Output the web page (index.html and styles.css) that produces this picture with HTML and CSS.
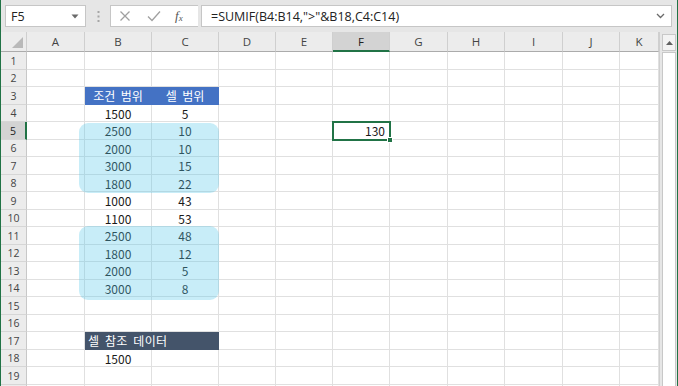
FILE: index.html
```html
<!DOCTYPE html>
<html lang="ko">
<head>
<meta charset="utf-8">
<title>SUMIF</title>
<link rel="stylesheet" href="styles.css">
</head>
<body>
<div class="app">
  <div class="toolbar">
    <div class="namebox">
      <span>F5</span>
      <svg class="nb-arrow" width="8" height="5" viewBox="0 0 8 5"><path d="M0.5 0.5 L7.5 0.5 L4 4.5 Z" fill="#6a6a6a"/></svg>
    </div>
    <div class="grip">
      <svg width="3" height="11" viewBox="0 0 3 11"><rect x="0.5" y="0" width="2" height="2" fill="#a6a6a6"/><rect x="0.5" y="4.5" width="2" height="2" fill="#a6a6a6"/><rect x="0.5" y="9" width="2" height="2" fill="#a6a6a6"/></svg>
    </div>
    <div class="fnbtns">
      <svg class="ic-x" width="12" height="12" viewBox="0 0 12 12"><path d="M1.5 1.5 L10.5 10.5 M10.5 1.5 L1.5 10.5" stroke="#a0a0a0" stroke-width="1.3" fill="none"/></svg>
      <svg class="ic-ok" width="14" height="12" viewBox="0 0 14 12"><path d="M1 6.5 L5 10.5 L13 1.5" stroke="#a0a0a0" stroke-width="1.3" fill="none"/></svg>
      <span class="fx">f<sub>x</sub></span>
    </div>
    <div class="formula">
      <span class="ftext">=SUMIF(B4:B14,"&gt;"&amp;B18,C4:C14)</span>
      <svg class="chev" width="9" height="6" viewBox="0 0 9 6"><path d="M1 1 L4.5 4.5 L8 1" stroke="#6a6a6a" stroke-width="1.3" fill="none"/></svg>
    </div>
  </div>

  <div class="sheet">
    <div class="grid">
      <div class="row hdr">
        <div class="corner"><svg width="11" height="11" viewBox="0 0 11 11"><path d="M11 0 L11 11 L0 11 Z" fill="#b9b9b9"/></svg></div>
        <div>A</div><div>B</div><div>C</div><div>D</div><div>E</div><div class="selcol">F</div><div>G</div><div>H</div><div>I</div><div>J</div><div>K</div>
      </div>
      <div class="row r-odd"><div class="rh">1</div><div></div><div></div><div></div><div></div><div></div><div></div><div></div><div></div><div></div><div></div><div></div></div>
      <div class="row r-even"><div class="rh">2</div><div></div><div></div><div></div><div></div><div></div><div></div><div></div><div></div><div></div><div></div><div></div></div>
      <div class="row r-odd"><div class="rh">3</div><div></div><div class="blue c">조건 범위</div><div class="blue c">셀 범위</div><div></div><div></div><div></div><div></div><div></div><div></div><div></div><div></div></div>
      <div class="row r-even"><div class="rh">4</div><div></div><div class="c">1500</div><div class="c">5</div><div></div><div></div><div></div><div></div><div></div><div></div><div></div><div></div></div>
      <div class="row r-odd"><div class="rh selrow">5</div><div></div><div class="c">2500</div><div class="c">10</div><div></div><div></div><div class="r">130</div><div></div><div></div><div></div><div></div><div></div></div>
      <div class="row r-even"><div class="rh">6</div><div></div><div class="c">2000</div><div class="c">10</div><div></div><div></div><div></div><div></div><div></div><div></div><div></div><div></div></div>
      <div class="row r-odd"><div class="rh">7</div><div></div><div class="c">3000</div><div class="c">15</div><div></div><div></div><div></div><div></div><div></div><div></div><div></div><div></div></div>
      <div class="row r-even"><div class="rh">8</div><div></div><div class="c">1800</div><div class="c">22</div><div></div><div></div><div></div><div></div><div></div><div></div><div></div><div></div></div>
      <div class="row r-odd"><div class="rh">9</div><div></div><div class="c">1000</div><div class="c">43</div><div></div><div></div><div></div><div></div><div></div><div></div><div></div><div></div></div>
      <div class="row r-even"><div class="rh">10</div><div></div><div class="c">1100</div><div class="c">53</div><div></div><div></div><div></div><div></div><div></div><div></div><div></div><div></div></div>
      <div class="row r-odd"><div class="rh">11</div><div></div><div class="c">2500</div><div class="c">48</div><div></div><div></div><div></div><div></div><div></div><div></div><div></div><div></div></div>
      <div class="row r-even"><div class="rh">12</div><div></div><div class="c">1800</div><div class="c">12</div><div></div><div></div><div></div><div></div><div></div><div></div><div></div><div></div></div>
      <div class="row r-odd"><div class="rh">13</div><div></div><div class="c">2000</div><div class="c">5</div><div></div><div></div><div></div><div></div><div></div><div></div><div></div><div></div></div>
      <div class="row r-even"><div class="rh">14</div><div></div><div class="c">3000</div><div class="c">8</div><div></div><div></div><div></div><div></div><div></div><div></div><div></div><div></div></div>
      <div class="row r-odd"><div class="rh">15</div><div></div><div></div><div></div><div></div><div></div><div></div><div></div><div></div><div></div><div></div><div></div></div>
      <div class="row r-even"><div class="rh">16</div><div></div><div></div><div></div><div></div><div></div><div></div><div></div><div></div><div></div><div></div><div></div></div>
      <div class="row r-odd"><div class="rh">17</div><div></div><div class="dark span2">셀 참조 데이터</div><div></div><div></div><div></div><div></div><div></div><div></div><div></div><div></div></div>
      <div class="row r-even"><div class="rh">18</div><div></div><div class="c">1500</div><div></div><div></div><div></div><div></div><div></div><div></div><div></div><div></div><div></div></div>
      <div class="row r-odd"><div class="rh">19</div><div></div><div></div><div></div><div></div><div></div><div></div><div></div><div></div><div></div><div></div><div></div></div>
      <div class="row r-even"><div class="rh"></div><div></div><div></div><div></div><div></div><div></div><div></div><div></div><div></div><div></div><div></div><div></div></div>
    </div>

    <div class="vscroll">
      <div class="sb-up"><svg width="7" height="4" viewBox="0 0 7 4"><path d="M0 4 L3.5 0 L7 4 Z" fill="#606060"/></svg></div>
      <div class="sb-thumb"></div>
    </div>

    <div class="hl hl1"></div>
    <div class="hl hl2"></div>
    <div class="sel"><span class="handle"></span></div>
  </div>
</div>
</body>
</html>
```

FILE: styles.css
```css
* { box-sizing: border-box; }
html, body { margin: 0; padding: 0; }
body {
  width: 678px;
  height: 386px;
  overflow: hidden;
  background: #ffffff;
  font-family: "Noto Sans CJK KR", "Noto Sans", sans-serif;
}
.app {
  width: 678px;
  height: 386px;
  border-left: 1px solid #217346;
  border-right: 1px solid #217346;
  display: flex;
  flex-direction: column;
  background: #e6e6e6;
  overflow: hidden;
}

/* ---------- formula bar ---------- */
.toolbar {
  height: 32px;
  flex: none;
  display: flex;
  align-items: flex-start;
  padding: 5px 5px 0 4px;
  background: #e6e6e6;
}
.namebox {
  width: 81px;
  height: 22px;
  background: #fff;
  border: 1px solid #c6c6c6;
  display: flex;
  align-items: center;
  justify-content: space-between;
  padding: 0 6px 0 5px;
  font-family: "Open Sans", "Noto Sans", sans-serif;
  font-size: 12.5px;
  color: #222;
}
.grip {
  width: 24px;
  height: 22px;
  display: flex;
  align-items: center;
  justify-content: center;
}
.fnbtns {
  width: 88px;
  height: 22px;
  background: #fff;
  border: 1px solid #c6c6c6;
  border-right: none;
  display: flex;
  align-items: center;
  padding: 0 0 0 8px;
}
.ic-x { margin-right: 16px; }
.ic-ok { margin-right: 14px; }
.fx {
  font-family: "Liberation Serif", serif;
  font-style: italic;
  font-size: 13px;
  color: #555;
  line-height: 1;
}
.fx sub { font-size: 9px; vertical-align: -1px; }
.formula {
  flex: 1;
  height: 22px;
  margin-left: 3px;
  background: #fff;
  border: 1px solid #c6c6c6;
  display: flex;
  align-items: center;
  justify-content: space-between;
  padding: 0 6px 0 9px;
}
.ftext {
  font-family: "Open Sans", "Noto Sans", sans-serif;
  font-size: 12.5px;
  color: #222;
}

/* ---------- sheet ---------- */
.sheet {
  position: relative;
  flex: 1;
  display: flex;
  background: #fff;
  overflow: hidden;
}
.grid { width: 658px; flex: none; }
.row {
  display: grid;
  grid-template-columns: 26px 58px 67px 67px 57px 57px 57px 58px 57px 58px 57px 39px;
}
.r-odd { height: 18px; }
.r-even { height: 17px; }
.row > div {
  border-right: 1px solid #e0e0e0;
  border-bottom: 1px solid #e0e0e0;
  font-size: 12px;
  color: #1a1a1a;
  display: flex;
  align-items: center;
  white-space: nowrap;
  overflow: hidden;
}
.row > div.rh {
  background: #ececec;
  border-right: 1px solid #c8c8c8;
  border-bottom: 1px solid #d6d6d6;
  justify-content: center;
  font-family: "Open Sans", "Noto Sans", sans-serif;
  font-size: 10.5px;
  color: #444;
}
.row > div.selrow {
  background: #d3d3d3;
  border-right: 2px solid #217346;
  color: #222;
}
.hdr { height: 20px; }
.hdr > div {
  background: #ececec;
  border-right: 1px solid #cfcfcf !important;
  border-bottom: 1px solid #ababab !important;
  justify-content: center;
  font-family: "Open Sans", "Noto Sans", sans-serif;
  font-size: 11.5px !important;
  color: #444 !important;
}
.hdr > div.corner {
  justify-content: flex-end;
  align-items: flex-end;
  padding: 0 3px 3px 0;
}
.hdr > div.selcol {
  background: #d3d3d3;
  border-bottom: 2px solid #217346 !important;
  color: #222 !important;
}
.row > div.c { justify-content: center; }
.row > div.r { justify-content: flex-end; padding-right: 4px; }
.row > div.blue {
  background: #4472c4;
  border-color: #4472c4;
  color: #fff;
  word-spacing: 2px;
}
.row > div.dark {
  background: #44546a;
  border-color: #44546a;
  color: #fff;
  padding-left: 3px;
  letter-spacing: 0.3px;
  word-spacing: 2px;
}
.span2 { grid-column: span 2; }

/* ---------- scrollbar ---------- */
.vscroll {
  width: 18px;
  flex: none;
  background: #e6e6e6;
  border-left: 1px solid #cfcfcf;
  display: flex;
  flex-direction: column;
  padding: 2px 1px 0 2px;
  gap: 1px;
}
.sb-up {
  height: 17px;
  background: #f3f3f3;
  border: 1px solid #c8c8c8;
  display: flex;
  align-items: center;
  justify-content: center;
}
.sb-thumb {
  flex: 1;
  background: #fff;
  border: 1px solid #c8c8c8;
  margin-bottom: -2px;
}

/* ---------- overlays ---------- */
.hl {
  position: absolute;
  left: 78px;
  width: 140px;
  background: rgba(89, 201, 235, 0.33);
  border-radius: 9px;
}
.hl1 { top: 91px; height: 70px; }
.hl2 { top: 194px; height: 74px; }
.sel {
  position: absolute;
  left: 331px;
  top: 89px;
  width: 59px;
  height: 20px;
  border: 2px solid #217346;
}
.handle {
  position: absolute;
  right: -4px;
  bottom: -4px;
  width: 6px;
  height: 6px;
  background: #217346;
  border: 1px solid #fff;
}
```
